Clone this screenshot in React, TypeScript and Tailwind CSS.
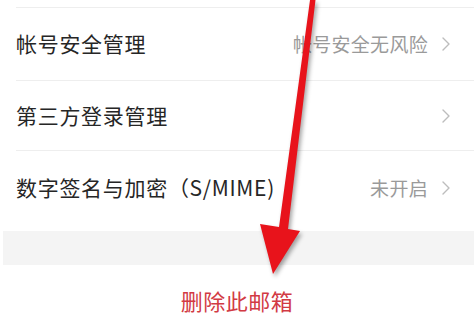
import { ChevronRight } from "lucide-react";

const cjk = { fontFamily: '"Noto Sans CJK SC", "Noto Sans", sans-serif' };

function Row({ title, value, h }: { title: string; value?: string; h: string }) {
  return (
    <div className={`flex items-center pl-4 pr-4 ${h}`}>
      <span className="text-[21px] text-[#262626] tracking-[0.7px]">{title}</span>
      <div className="ml-auto flex items-center">
        {value && <span className="text-[19px] text-[#9a9a9a] tracking-[0.3px]">{value}</span>}
        <ChevronRight className="ml-[6px] w-6 h-6 text-[#bdbdbd]" strokeWidth={1.4} />
      </div>
    </div>
  );
}

export default function App() {
  return (
    <div className="relative w-[474px] h-[332px] bg-white overflow-hidden" style={cjk}>
      <div className="h-[7px]" />
      <div className="ml-4 h-px bg-[#eeeeee]" />
      <Row title="帐号安全管理" value="帐号安全无风险" h="h-[72px]" />
      <div className="ml-4 h-px bg-[#eeeeee]" />
      <Row title="第三方登录管理" h="h-[69px]" />
      <div className="ml-4 h-px bg-[#eeeeee]" />
      <Row title="数字签名与加密（S/MIME)" value="未开启" h="h-[74px]" />
      <div className="h-[6px]" />
      <div className="ml-[3px] h-[34px] bg-[#f4f4f4]" />
      <div className="flex justify-center pt-[19px]">
        <span className="text-[22px] text-[#d23a44] tracking-[0.5px]">删除此邮箱</span>
      </div>

      {/* red annotation arrow */}
      <svg
        className="absolute left-0 top-0 drop-shadow-[2px_3px_2px_rgba(0,0,0,0.35)]"
        width="474"
        height="332"
        viewBox="0 0 474 332"
      >
        <polygon
          points="310,0 315.5,0 288,229 300,231 273,274 260,224 279,227"
          fill="#e8131b"
        />
      </svg>
    </div>
  );
}
